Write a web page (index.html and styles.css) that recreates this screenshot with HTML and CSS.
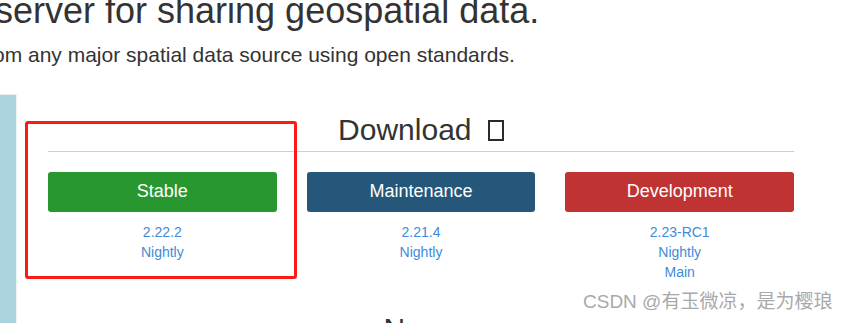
FILE: index.html
```html
<!DOCTYPE html>
<html lang="en">
<head>
  <meta charset="UTF-8">
  <meta name="viewport" content="width=device-width, initial-scale=1.0">
  <title>GeoServer</title>
  <link rel="stylesheet" href="styles.css">
</head>
<body>
  <div class="intro">
    <h1>server for sharing geospatial data.</h1>
    <p class="lead">om any major spatial data source using open standards.</p>
  </div>

  <div class="main">
    <div class="side"></div>
    <div class="content">
      <h2 class="title">Download <span class="tofu"></span></h2>
      <div class="releases">
        <div class="release">
          <a class="btn btn-stable" href="javascript:;">Stable</a>
          <ul class="links">
            <li><a href="javascript:;">2.22.2</a></li>
            <li><a href="javascript:;">Nightly</a></li>
          </ul>
        </div>
        <div class="release">
          <a class="btn btn-maint" href="javascript:;">Maintenance</a>
          <ul class="links">
            <li><a href="javascript:;">2.21.4</a></li>
            <li><a href="javascript:;">Nightly</a></li>
          </ul>
        </div>
        <div class="release">
          <a class="btn btn-dev" href="javascript:;">Development</a>
          <ul class="links">
            <li><a href="javascript:;">2.23-RC1</a></li>
            <li><a href="javascript:;">Nightly</a></li>
            <li><a href="javascript:;">Main</a></li>
          </ul>
        </div>
      </div>
      <h2 class="next">News</h2>
    </div>
  </div>

  <!-- 标注框 + 水印 -->
  <div class="mark"></div>
  <div class="watermark">CSDN @有玉微凉，是为樱琅</div>
</body>
</html>
```

FILE: styles.css
```css
html, body {
  margin: 0;
  padding: 0;
  height: 100%;
  overflow: hidden;
}
body {
  font-family: "Liberation Sans", Arial, sans-serif;
  color: #333;
  background: #fff;
  position: relative;
}
a, ul, li {
  list-style: none;
  text-decoration: none;
  margin: 0;
  padding: 0;
}
.intro {
  margin-left: -5px;
}
.intro h1 {
  font-size: 36px;
  font-weight: normal;
  line-height: 36px;
  margin: -7px 0 0 0;
  white-space: nowrap;
}
.intro .lead {
  font-size: 21px;
  line-height: 30px;
  margin: 11px 0 0 -2px;
  white-space: nowrap;
}
.main {
  display: flex;
  margin-top: 24px;
}
.side {
  width: 16px;
  height: 240px;
  background: #abd3e0;
  border-top: 1px solid #e6eef0;
  border-right: 1px solid #eef3f4;
  flex-shrink: 0;
}
.content {
  width: 746px;
  margin-left: 31px;
  padding-top: 19px;
}
.title {
  font-size: 30px;
  font-weight: normal;
  line-height: 33px;
  text-align: center;
  margin: 0;
  padding-bottom: 5px;
  border-bottom: 1px solid #c9dc9f;
}
.tofu {
  display: inline-block;
  width: 12px;
  height: 17px;
  border: 2px solid #2b2b2b;
  margin-left: 8px;
  vertical-align: -1px;
}
.releases {
  display: flex;
  gap: 30px;
  margin-top: 20px;
}
.release {
  flex: 1;
  text-align: center;
}
.btn {
  display: block;
  height: 40px;
  line-height: 39px;
  font-size: 18px;
  color: #fff;
  border-radius: 3px;
}
.btn-stable {
  background: #28972f;
}
.btn-maint {
  background: #245779;
}
.btn-dev {
  background: #bf3432;
}
.links {
  margin-top: 10px;
}
.links li {
  font-size: 14px;
  line-height: 20px;
}
.links a {
  color: #3f8bd8;
}
.next {
  font-size: 30px;
  font-weight: normal;
  line-height: 33px;
  text-align: center;
  margin: 30px 0 0 0;
}
.mark {
  position: absolute;
  left: 25px;
  top: 121px;
  width: 266px;
  height: 152px;
  border: 3px solid #fa1a16;
  border-radius: 3px;
}
.watermark {
  position: absolute;
  left: 583px;
  top: 290px;
  font-family: "Liberation Sans", "Noto Sans CJK SC", sans-serif;
  font-size: 19px;
  line-height: 24px;
  color: #a9a9a9;
  text-shadow: 0 0 1px #fff;
  white-space: nowrap;
}
```
